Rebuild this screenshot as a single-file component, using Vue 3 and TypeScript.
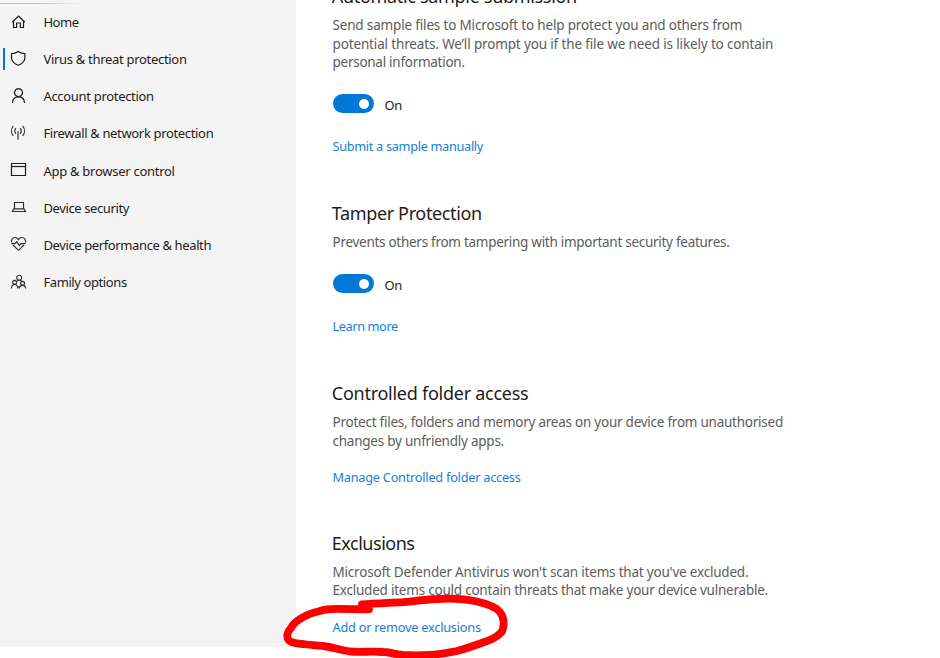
<script setup lang="ts">
interface TextLine {
  text: string
  tracking: number
}

interface NavItem extends TextLine {
  icon: string[]
  thin?: boolean
  active?: boolean
}

interface Section {
  title: TextLine
  body: TextLine[]
  toggle: boolean
  link: TextLine
}

const line = (text: string, tracking: number): TextLine => ({ text, tracking })

const nav: NavItem[] = [
  {
    text: 'Home',
    tracking: -0.4,
    icon: ['M4.2 10.2 L10.5 4 L16.8 10.2', 'M5.5 9.2 V15.5 H8.6 V11 H12.4 V15.5 H15.5 V9.2'],
  },
  {
    text: 'Virus & threat protection',
    tracking: -0.3,
    active: true,
    icon: ['M10.2 2.4 C8.2 3.8 6 4.5 3.5 4.5 V8.7 C3.5 12.5 6.8 14.9 10.2 16.3 C13.6 14.9 16.9 12.5 16.9 8.7 V4.5 C14.4 4.5 12.2 3.8 10.2 2.4 Z'],
  },
  {
    text: 'Account protection',
    tracking: -0.31,
    icon: ['M10.5 2.6 A4 4 0 1 1 10.49 2.6 Z', 'M4.5 16.9 C4.6 13.2 7 10.8 10.5 10.8 C14 10.8 16.4 13.2 16.5 16.9'],
  },
  {
    text: 'Firewall & network protection',
    tracking: -0.34,
    icon: [
      'M10 8 V16.8',
      'M7.9 5.2 C6.6 6.8 6.6 9.2 7.9 10.8',
      'M12.1 5.2 C13.4 6.8 13.4 9.2 12.1 10.8',
      'M5.3 3.2 C2.9 6 2.9 10 5.3 12.8',
      'M14.7 3.2 C17.1 6 17.1 10 14.7 12.8',
    ],
    thin: true,
  },
  {
    text: 'App & browser control',
    tracking: -0.27,
    icon: ['M3.5 3.5 H17.5 V15.5 H3.5 Z', 'M3.5 6.5 H17.5'],
  },
  {
    text: 'Device security',
    tracking: -0.38,
    icon: ['M6.5 10.8 V4.5 H15.5 V10.8', 'M6 10.8 H16 L17.6 13.5 H4.4 Z'],
    thin: true,
  },
  {
    text: 'Device performance & health',
    tracking: -0.38,
    icon: [
      'M3.6 7.6 C2.8 5 4.6 2.5 7 2.5 C8.7 2.5 9.8 3.5 10.5 4.6 C11.2 3.5 12.3 2.5 14 2.5 C16.4 2.5 18.2 5 17.4 7.6',
      'M5 10 L10.5 15.3 L16 10',
      'M3.4 8.6 H7 L8.8 6.6 L11.4 10.6 L13.2 8.6 H17.6',
    ],
    thin: true,
  },
  {
    text: 'Family options',
    tracking: -0.4,
    icon: [
      'M11.2 3.2 A2.5 2.5 0 1 1 11.19 3.2 Z',
      'M6.6 8.4 A2 2 0 1 1 6.59 8.4 Z',
      'M14.6 9.4 A2 2 0 1 1 14.59 9.4 Z',
      'M3.4 16.6 C3.4 14 4.6 12.5 6.6 12.5 C8.6 12.5 9.8 14 9.8 16.6',
      'M11.4 16.6 C11.4 14.6 12.6 13.4 14.6 13.4 C16.6 13.4 17.6 14.6 17.6 16.6',
      'M8.6 9.8 C9 8.7 10 8.2 11.2 8.2 C12.4 8.2 13.4 8.7 14 9.4',
      'M9.6 15 L11.8 15',
    ],
    thin: true,
  },
]

const sections: Section[] = [
  {
    title: line('Automatic sample submission', -0.32),
    body: [
      line('Send sample files to Microsoft to help protect you and others from', -0.165),
      line('potential threats. We’ll prompt you if the file we need is likely to contain', -0.145),
      line('personal information.', -0.27),
    ],
    toggle: true,
    link: line('Submit a sample manually', -0.32),
  },
  {
    title: line('Tamper Protection', -0.36),
    body: [line('Prevents others from tampering with important security features.', -0.28)],
    toggle: true,
    link: line('Learn more', -0.4),
  },
  {
    title: line('Controlled folder access', -0.26),
    body: [
      line('Protect files, folders and memory areas on your device from unauthorised', -0.245),
      line('changes by unfriendly apps.', -0.235),
    ],
    toggle: false,
    link: line('Manage Controlled folder access', -0.25),
  },
  {
    title: line('Exclusions', -0.48),
    body: [
      line("Microsoft Defender Antivirus won't scan items that you've excluded.", -0.2),
      line('Excluded items could contain threats that make your device vulnerable.', -0.22),
    ],
    toggle: false,
    link: line('Add or remove exclusions', -0.23),
  },
]

const track = (l: TextLine) => ({ letterSpacing: `${l.tracking}px` })
</script>

<template>
  <div class="window">
    <nav class="sidebar">
      <div class="rule"></div>
      <a v-for="item in nav" :key="item.text" class="nav-item" :class="{ active: item.active }">
        <svg class="icon" :class="{ thin: item.thin }" viewBox="0 0 20 21">
          <path v-for="d in item.icon" :key="d" :d="d" />
        </svg>
        <span class="label" :style="track(item)">{{ item.text }}</span>
      </a>
    </nav>

    <main class="content">
      <section v-for="s in sections" :key="s.title.text" class="section">
        <h2 :style="track(s.title)">{{ s.title.text }}</h2>
        <p v-for="b in s.body" :key="b.text" :style="track(b)">{{ b.text }}</p>
        <div v-if="s.toggle" class="toggle-row">
          <span class="toggle"><span class="knob"></span></span>
          <span class="state">On</span>
        </div>
        <a class="link" :style="track(s.link)">{{ s.link.text }}</a>
      </section>
    </main>

    <svg class="marker" viewBox="0 0 940 658">
      <path
        d="M362 604.5 C375 603.5 389 603 403 602.2 C415 601 425 599.5 437 599 C452 598 466 599 477 601.5 C488 604 495 606.5 499.5 611.5 C502.5 615 504 620 503.5 625.5 C503 630 502.5 632 499.5 634 C495.5 638 491 640 483 642.5 C473 646 466 648.5 457 651 C448 652.5 438 654.5 430 655 C420 655.5 411 655.5 403 655 C394 654 389 652 383 652 C372 651 361 652.5 350 651.5 C340 650 332 647 323 646 C316 645 309 645 303 644 C298 643.5 292 643.5 289 640.5 C286 637 287 632 291 628 C293 624 296 621.5 300 619 C306 615 313 612.5 320 611 C326 608.8 331 608.8 337 608.8 L369 609.3"
      />
    </svg>
  </div>
</template>

<style>
body {
  margin: 0;
  background: #fff;
}
</style>

<style scoped>
.window {
  position: relative;
  display: flex;
  align-items: flex-start;
  width: 940px;
  height: 658px;
  overflow: hidden;
  background: #fff;
  color: #1c1c1c;
  font-family: 'Noto Sans', 'Open Sans', sans-serif;
  white-space: nowrap;
}

.sidebar {
  flex: none;
  box-sizing: border-box;
  width: 296px;
  height: 647px;
  padding-top: 3px;
  background: #f4f4f4;
}

.rule {
  width: 82px;
  height: 1px;
  background: linear-gradient(to right, #c2c2c2 50%, #f4f4f4);
}

.nav-item {
  display: flex;
  align-items: center;
  height: 37.1px;
  font-size: 13px;
  line-height: 20px;
}

.nav-item.active {
  background: linear-gradient(#0078d7, #0078d7) 3px 7px / 2px 22px no-repeat;
}

.label {
  padding-bottom: 0.8px;
}

.icon {
  flex: none;
  width: 20px;
  height: 21px;
  margin: 0 15.4px 0 8px;
  fill: none;
  stroke: #1c1c1c;
  stroke-width: 1.2;
}

.icon.thin {
  stroke: #2c2c2c;
  stroke-width: 1.15;
}

.content {
  margin-top: -16px;
  padding-left: 36.5px;
}

.section {
  display: flex;
  flex-direction: column;
  align-items: flex-start;
  margin-bottom: 46px;
}

h2 {
  margin: 0 0 8px -0.7px;
  font-size: 18px;
  font-weight: 400;
  line-height: 24px;
}

p {
  margin: 0;
  color: #5c5c5c;
  font-size: 13.5px;
  line-height: 18.5px;
}

.toggle-row {
  display: flex;
  align-items: center;
  gap: 11px;
  height: 19px;
  margin: 22.5px 0 6px;
}

.toggle {
  display: flex;
  align-items: center;
  justify-content: flex-end;
  box-sizing: border-box;
  width: 41px;
  height: 19px;
  padding-right: 4.5px;
  border-radius: 10px;
  background: #0078d7;
}

.knob {
  width: 10px;
  height: 10px;
  border-radius: 50%;
  background: #fff;
}

.state {
  padding-top: 2.5px;
  font-size: 13px;
  line-height: 18px;
  letter-spacing: -0.3px;
}

.link {
  margin: 18px 0 -1.4px;
  color: #1580da;
  font-size: 12.75px;
  line-height: 18px;
}

.toggle-row + .link {
  margin: 18px 0 0;
}

.marker {
  position: absolute;
  inset: 0;
  width: 940px;
  height: 658px;
  fill: none;
  stroke: #fe0000;
  stroke-width: 7.8;
  stroke-linecap: round;
  stroke-linejoin: round;
  pointer-events: none;
}
</style>
